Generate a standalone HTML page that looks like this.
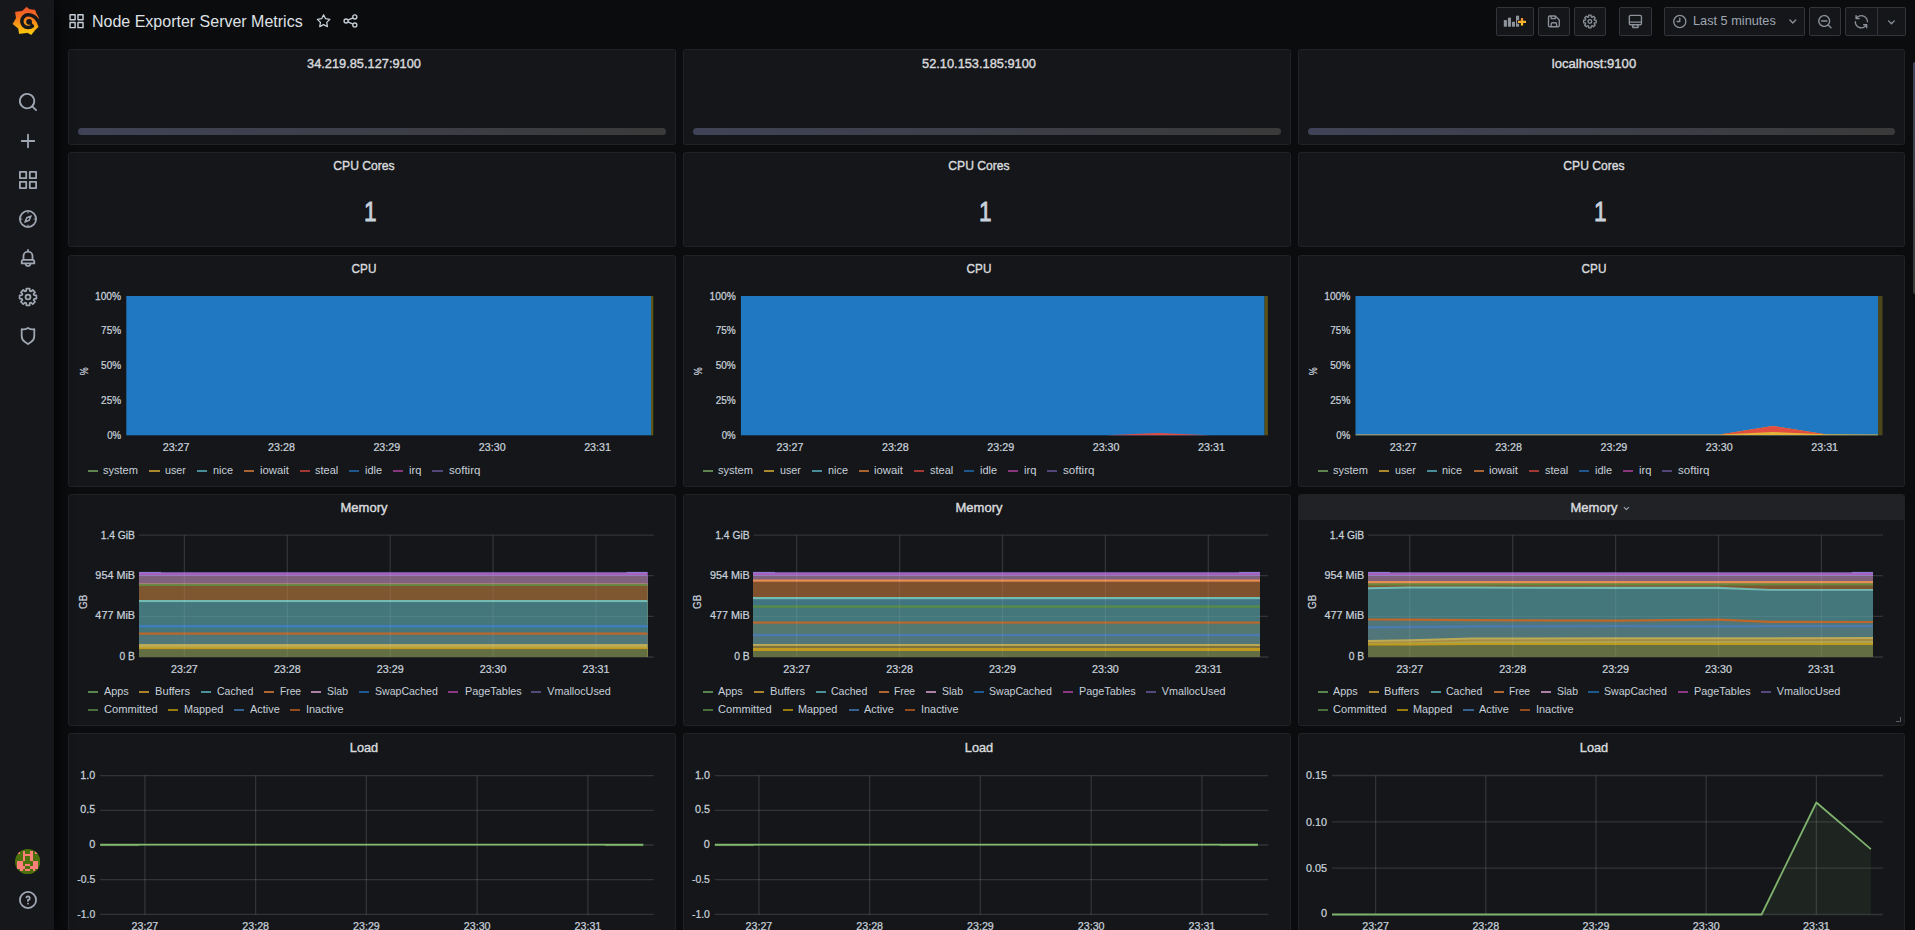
<!DOCTYPE html>
<html lang="en"><head><meta charset="utf-8">
<title>Node Exporter Server Metrics - Grafana</title>
<style>
*{box-sizing:border-box}
html,body{margin:0;padding:0}
body{width:1915px;height:930px;overflow:hidden;background:#0b0c0e;color:#c7d0d9;
 font-family:"Liberation Sans",sans-serif;font-size:12.6px;position:relative}
.abs{position:absolute}
.sidebar{position:absolute;left:0;top:0;width:54px;height:930px;background:#16171b;
 box-shadow:0 0 18px #000;z-index:5}
.sidebar svg{position:absolute}
.nav{position:absolute;left:54px;top:0;right:0;height:47px}
.title{position:absolute;top:9.9px;font-size:16.2px;line-height:22px;color:#dfe1e5;
 white-space:nowrap;transform-origin:0 50%}
.nbtn{position:absolute;top:7.2px;height:28.6px;background:#141619;border:1px solid #33353a;
 border-radius:1.8px}
.nbtn svg{position:absolute}
.tp{position:absolute;left:28.1px;top:6.1px;font-size:12.6px;line-height:15px;color:#9fa7b3;white-space:nowrap;
 transform-origin:0 50%;transform:scaleX(1.011)}
.panel{position:absolute;background:#141619;border:1px solid #202226;border-radius:2.6px;overflow:hidden}
.ptitle{position:absolute;top:6.3px;height:15px;line-height:15px;font-size:12.6px;
 color:#d8dadd;-webkit-text-stroke:0.4px #d8dadd;white-space:nowrap;text-align:center}
.thumb{position:absolute;left:8.8px;right:8.8px;bottom:8.9px;height:7.2px;border-radius:3.6px;
 background:linear-gradient(to right,#404357,#3a3a3a)}
.big{position:absolute;left:0;right:0;top:43.9px;text-align:center;font-size:27px;line-height:30px;
 color:#c9d1db;-webkit-text-stroke:0.8px #c9d1db}
.lg{position:absolute;font-size:10.8px;line-height:13px;color:#c7d0d9;white-space:nowrap;transform-origin:0 50%}
.ld{position:absolute;height:1.6px;width:10.2px}
svg text{font-family:"Liberation Sans",sans-serif}
.vthumb{position:absolute;left:1913.1px;top:61.7px;width:4px;height:232.8px;border-radius:2px;
 background:linear-gradient(to bottom,#404357,#3a3a3a);z-index:6}
</style></head><body>
<div class="sidebar">
<svg style="position:absolute;left:11px;top:5px" width="30" height="32" viewBox="0 0 872 930"><defs><linearGradient id="lgo" x1="0" y1="0" x2="0" y2="1"><stop offset="0.1" stop-color="#f05a28"/><stop offset="0.35" stop-color="#f4701f"/><stop offset="1" stop-color="#fcd10a"/></linearGradient></defs><path d="M450 55 L535 125 L700 148 L735 250 L795 350 L812 445 L760 395 L745 500 L795 640 L700 725 L590 865 L480 805 L240 835 L212 680 L52 550 L150 380 L122 200 L330 172Z" fill="url(#lgo)" stroke="url(#lgo)" stroke-width="8" stroke-linejoin="round"/><path d="M778 452 C742 388 682 328 600 300 C560 286 530 284 500 284 A186 186 0 0 0 314 470 A186 186 0 0 0 500 656 C550 656 596 640 622 612" fill="none" stroke="#16171b" stroke-width="102" stroke-linecap="round"/><path d="M628 618 L580 540" fill="none" stroke="#16171b" stroke-width="64" stroke-linecap="round"/><circle cx="526" cy="490" r="84" fill="#16171b"/></svg>
<svg style="position:absolute;left:0;top:0;transform:translate(17.20px,91.20px)" width="21.60" height="21.60" viewBox="0 0 24 24"><path fill="#9fa7b3" d="M21.71,20.29,18,16.61A9,9,0,1,0,16.61,18l3.68,3.68a1,1,0,0,0,1.42,0A1,1,0,0,0,21.71,20.29ZM11,18a7,7,0,1,1,7-7A7,7,0,0,1,11,18Z"/></svg>
<svg style="position:absolute;left:0;top:0;transform:translate(17.20px,130.20px)" width="21.60" height="21.60" viewBox="0 0 24 24"><path fill="#9fa7b3" d="M19,11H13V5a1,1,0,0,0-2,0v6H5a1,1,0,0,0,0,2h6v6a1,1,0,0,0,2,0V13h6a1,1,0,0,0,0-2Z"/></svg>
<svg style="position:absolute;left:0;top:0;transform:translate(17.20px,169.20px)" width="21.60" height="21.60" viewBox="0 0 24 24"><path fill="#9fa7b3" d="M10,13H3a1,1,0,0,0-1,1v7a1,1,0,0,0,1,1h7a1,1,0,0,0,1-1V14A1,1,0,0,0,10,13ZM9,20H4V15H9ZM21,2H14a1,1,0,0,0-1,1v7a1,1,0,0,0,1,1h7a1,1,0,0,0,1-1V3A1,1,0,0,0,21,2ZM20,9H15V4h5Zm1,4H14a1,1,0,0,0-1,1v7a1,1,0,0,0,1,1h7a1,1,0,0,0,1-1V14A1,1,0,0,0,21,13Zm-1,7H15V15h5ZM10,2H3A1,1,0,0,0,2,3v7a1,1,0,0,0,1,1h7a1,1,0,0,0,1-1V3A1,1,0,0,0,10,2ZM9,9H4V4H9Z"/></svg>
<svg style="position:absolute;left:0;top:0;transform:translate(17.20px,208.20px)" width="21.60" height="21.60" viewBox="0 0 24 24"><circle cx="12" cy="12" r="9" fill="none" stroke="#9fa7b3" stroke-width="2"/><path fill="#9fa7b3" stroke="#9fa7b3" stroke-width="1.3" stroke-linejoin="round" d="M15.6 8.4 L13.5 13.5 L8.4 15.6 L10.5 10.5Z"/><ellipse cx="12" cy="12" rx="1.7" ry="0.85" transform="rotate(-45 12 12)" fill="#16171b"/><path stroke="#9fa7b3" stroke-width="1.3" stroke-linecap="round" d="M12 4.7v.5M12 18.8v.5M4.7 12h.5M18.8 12h.5"/></svg>
<svg style="position:absolute;left:0;top:0;transform:translate(17.20px,247.20px)" width="21.60" height="21.60" viewBox="0 0 24 24"><path fill="#9fa7b3" d="M18,13.18V10a6,6,0,0,0-5-5.91V3a1,1,0,0,0-2,0V4.09A6,6,0,0,0,6,10v3.18A3,3,0,0,0,4,16v2a1,1,0,0,0,1,1H8.14a4,4,0,0,0,7.72,0H19a1,1,0,0,0,1-1V16A3,3,0,0,0,18,13.18ZM8,10a4,4,0,0,1,8,0v3H8Zm4,10a2,2,0,0,1-1.72-1h3.44A2,2,0,0,1,12,20Zm6-3H6V16a1,1,0,0,1,1-1H17a1,1,0,0,1,1,1Z"/></svg>
<svg style="position:absolute;left:0;top:0;transform:translate(17.20px,286.20px)" width="21.60" height="21.60" viewBox="0 0 24 24"><path d="M10.02 5.18 L10.15 2.68 L13.85 2.68 L13.98 5.18 L15.42 5.78 L17.28 4.10 L19.90 6.72 L18.22 8.58 L18.82 10.02 L21.32 10.15 L21.32 13.85 L18.82 13.98 L18.22 15.42 L19.90 17.28 L17.28 19.90 L15.42 18.22 L13.98 18.82 L13.85 21.32 L10.15 21.32 L10.02 18.82 L8.58 18.22 L6.72 19.90 L4.10 17.28 L5.78 15.42 L5.18 13.98 L2.68 13.85 L2.68 10.15 L5.18 10.02 L5.78 8.58 L4.10 6.72 L6.72 4.10 L8.58 5.78Z" fill="none" stroke="#9fa7b3" stroke-width="1.9" stroke-linejoin="round"/><circle cx="12" cy="12" r="2.7" fill="none" stroke="#9fa7b3" stroke-width="2"/></svg>
<svg style="position:absolute;left:0;top:0;transform:translate(17.20px,325.20px)" width="21.60" height="21.60" viewBox="0 0 24 24"><path fill="#9fa7b3" d="M19.63,3.65a1,1,0,0,0-.84-.2,8,8,0,0,1-6.22-1.27,1,1,0,0,0-1.14,0A8,8,0,0,1,5.21,3.45a1,1,0,0,0-.84.2A1,1,0,0,0,4,4.43v7.45a9,9,0,0,0,3.77,7.33l3.65,2.6a1,1,0,0,0,1.16,0l3.65-2.6A9,9,0,0,0,20,11.88V4.43A1,1,0,0,0,19.63,3.65ZM18,11.88a7,7,0,0,1-2.93,5.7L12,19.77,8.93,17.58A7,7,0,0,1,6,11.88V5.58a10,10,0,0,0,6-1.39,10,10,0,0,0,6,1.39Z"/></svg>
<svg style="position:absolute;left:14.9px;top:848.8px" width="25.3" height="25.3" viewBox="0 0 25.3 25.3"><defs><clipPath id="avc"><circle cx="12.65" cy="12.65" r="12.65"/></clipPath></defs><g clip-path="url(#avc)"><rect width="25.3" height="25.3" fill="#4c700c"/><g fill="#ff8078" shape-rendering="crispEdges"><rect x="2.47" y="2.07" width="2.77" height="2.77"/><rect x="7.51" y="2.07" width="2.77" height="2.77"/><rect x="15.07" y="2.07" width="2.77" height="2.77"/><rect x="20.11" y="2.07" width="2.77" height="2.77"/><rect x="7.51" y="4.59" width="2.77" height="2.77"/><rect x="10.03" y="4.59" width="2.77" height="2.77"/><rect x="12.55" y="4.59" width="2.77" height="2.77"/><rect x="15.07" y="4.59" width="2.77" height="2.77"/><rect x="7.51" y="7.11" width="2.77" height="2.77"/><rect x="15.07" y="7.11" width="2.77" height="2.77"/><rect x="7.51" y="9.63" width="2.77" height="2.77"/><rect x="15.07" y="9.63" width="2.77" height="2.77"/><rect x="2.47" y="12.15" width="2.77" height="2.77"/><rect x="4.99" y="12.15" width="2.77" height="2.77"/><rect x="17.59" y="12.15" width="2.77" height="2.77"/><rect x="20.11" y="12.15" width="2.77" height="2.77"/><rect x="2.47" y="14.67" width="2.77" height="2.77"/><rect x="4.99" y="14.67" width="2.77" height="2.77"/><rect x="10.03" y="14.67" width="2.77" height="2.77"/><rect x="12.55" y="14.67" width="2.77" height="2.77"/><rect x="17.59" y="14.67" width="2.77" height="2.77"/><rect x="20.11" y="14.67" width="2.77" height="2.77"/><rect x="2.47" y="17.19" width="2.77" height="2.77"/><rect x="4.99" y="17.19" width="2.77" height="2.77"/><rect x="7.51" y="17.19" width="2.77" height="2.77"/><rect x="15.07" y="17.19" width="2.77" height="2.77"/><rect x="17.59" y="17.19" width="2.77" height="2.77"/><rect x="20.11" y="17.19" width="2.77" height="2.77"/><rect x="4.99" y="19.71" width="2.77" height="2.77"/><rect x="10.03" y="19.71" width="2.77" height="2.77"/><rect x="12.55" y="19.71" width="2.77" height="2.77"/><rect x="17.59" y="19.71" width="2.77" height="2.77"/></g></g></svg>
<svg style="position:absolute;left:0;top:0;transform:translate(17.20px,889.20px)" width="21.60" height="21.60" viewBox="0 0 24 24"><path fill="#9fa7b3" d="M11.29,15.29a1.58,1.58,0,0,0-.12.15.76.76,0,0,0-.09.18.64.64,0,0,0-.06.18,1.36,1.36,0,0,0,0,.2.84.84,0,0,0,.08.38.9.9,0,0,0,.54.54.94.94,0,0,0,.76,0,.9.9,0,0,0,.54-.54A1,1,0,0,0,13,16a1,1,0,0,0-.29-.71A1,1,0,0,0,11.29,15.29ZM12,2A10,10,0,1,0,22,12,10,10,0,0,0,12,2Zm0,18a8,8,0,1,1,8-8A8,8,0,0,1,12,20ZM12,7A3,3,0,0,0,9.4,8.5a1,1,0,1,0,1.73,1A1,1,0,0,1,12,9a1,1,0,0,1,0,2,1,1,0,0,0-1,1v1a1,1,0,0,0,2,0v-.18A3,3,0,0,0,12,7Z"/></svg>
</div>
<div class="nav">
<svg style="position:absolute;left:0;top:0;transform:translate(13.90px,12.50px)" width="17.30" height="17.30" viewBox="0 0 24 24"><path fill="#c7d0d9" d="M10,13H3a1,1,0,0,0-1,1v7a1,1,0,0,0,1,1h7a1,1,0,0,0,1-1V14A1,1,0,0,0,10,13ZM9,20H4V15H9ZM21,2H14a1,1,0,0,0-1,1v7a1,1,0,0,0,1,1h7a1,1,0,0,0,1-1V3A1,1,0,0,0,21,2ZM20,9H15V4h5Zm1,4H14a1,1,0,0,0-1,1v7a1,1,0,0,0,1,1h7a1,1,0,0,0,1-1V14A1,1,0,0,0,21,13Zm-1,7H15V15h5ZM10,2H3A1,1,0,0,0,2,3v7a1,1,0,0,0,1,1h7a1,1,0,0,0,1-1V3A1,1,0,0,0,10,2ZM9,9H4V4H9Z"/></svg>
<div class="title" style="left:37.6px;transform:scaleX(0.988)">Node Exporter Server Metrics</div>
<svg style="position:absolute;left:0;top:0;transform:translate(261.30px,12.80px)" width="16.20" height="16.20" viewBox="0 0 24 24"><path d="M12.30 3.00 L15.18 8.74 L21.53 9.70 L16.96 14.21 L18.00 20.55 L12.30 17.60 L6.60 20.55 L7.64 14.21 L3.07 9.70 L9.42 8.74Z" fill="none" stroke="#c7d0d9" stroke-width="1.9" stroke-linejoin="round"/></svg>
<svg style="position:absolute;left:0;top:0;transform:translate(288.70px,12.90px)" width="16.20" height="16.20" viewBox="0 0 24 24"><g fill="none" stroke="#c7d0d9" stroke-width="2"><circle cx="18" cy="6" r="3"/><circle cx="5" cy="12" r="3"/><circle cx="18" cy="18" r="3"/><path d="M7.7 10.7L15.3 7.4M7.7 13.3L15.3 16.6"/></g></svg>
<div class="nbtn" style="left:1442.1px;width:37.7px"><svg style="position:absolute;left:-1px;top:-1px" width="38" height="29" viewBox="0 0 38 29"><defs><linearGradient id="pag" x1="0" y1="0" x2="0" y2="1"><stop offset="0" stop-color="#f08a32"/><stop offset="1" stop-color="#ffd428"/></linearGradient></defs><g fill="#8e939c"><rect x="7.8" y="13.1" width="3.1" height="6.6"/><rect x="11.9" y="10.7" width="3.1" height="9"/><rect x="15.9" y="14.8" width="3.1" height="4.9"/><rect x="20" y="8.7" width="3.1" height="11"/></g><path d="M24.9 11.1h2.2v2.6h2.9v2.2h-2.9v2.6h-2.2v-2.6h-2.9v-2.2h2.9z" fill="#141619" stroke="#141619" stroke-width="1.6"/><path d="M24.9 11.1h2.2v2.6h2.9v2.2h-2.9v2.6h-2.2v-2.6h-2.9v-2.2h2.9z" fill="url(#pag)"/></svg></div>
<div class="nbtn" style="left:1484.1px;width:31.7px"><svg style="position:absolute;left:0;top:0;transform:translate(6.80px,5.30px)" width="16.20" height="16.20" viewBox="0 0 24 24"><path fill="#8b9099" d="M20.71,9.29l-6-6a1,1,0,0,0-.32-.21A1.09,1.09,0,0,0,14,3H6A3,3,0,0,0,3,6V18a3,3,0,0,0,3,3H18a3,3,0,0,0,3-3V10A1,1,0,0,0,20.71,9.29ZM9,5h4V7H9Zm6,14H9V16a1,1,0,0,1,1-1h4a1,1,0,0,1,1,1Zm4-1a1,1,0,0,1-1,1H17V16a3,3,0,0,0-3-3H10a3,3,0,0,0-3,3v3H6a1,1,0,0,1-1-1V6A1,1,0,0,1,6,5H7V8A1,1,0,0,0,8,9h6a1,1,0,0,0,1-1V6.41l4,4Z"/></svg></div>
<div class="nbtn" style="left:1520.1px;width:31.7px"><svg style="position:absolute;left:0;top:0;transform:translate(6.80px,5.40px)" width="16.20" height="16.20" viewBox="0 0 24 24"><path d="M10.02 5.18 L10.15 2.68 L13.85 2.68 L13.98 5.18 L15.42 5.78 L17.28 4.10 L19.90 6.72 L18.22 8.58 L18.82 10.02 L21.32 10.15 L21.32 13.85 L18.82 13.98 L18.22 15.42 L19.90 17.28 L17.28 19.90 L15.42 18.22 L13.98 18.82 L13.85 21.32 L10.15 21.32 L10.02 18.82 L8.58 18.22 L6.72 19.90 L4.10 17.28 L5.78 15.42 L5.18 13.98 L2.68 13.85 L2.68 10.15 L5.18 10.02 L5.78 8.58 L4.10 6.72 L6.72 4.10 L8.58 5.78Z" fill="none" stroke="#8b9099" stroke-width="1.9" stroke-linejoin="round"/><circle cx="12" cy="12" r="2.7" fill="none" stroke="#8b9099" stroke-width="2"/></svg></div>
<div class="nbtn" style="left:1565.1px;width:32.8px"><svg style="position:absolute;left:0;top:0;transform:translate(7.30px,5.30px)" width="16.20" height="16.20" viewBox="0 0 24 24"><path fill="#8b9099" d="M19,2H5A3,3,0,0,0,2,5V15a3,3,0,0,0,3,3H7.64l-.58,1a2,2,0,0,0,0,2,2,2,0,0,0,1.75,1h6.46A2,2,0,0,0,17,21a2,2,0,0,0,0-2l-.59-1H19a3,3,0,0,0,3-3V5A3,3,0,0,0,19,2ZM8.77,20,10,18H14l1.2,2ZM20,15a1,1,0,0,1-1,1H5a1,1,0,0,1-1-1V14H20Zm0-3H4V5A1,1,0,0,1,5,4H19a1,1,0,0,1,1,1Z"/></svg></div>
<div class="nbtn" style="left:1610.2px;width:140.8px"><svg style="position:absolute;left:0;top:0;transform:translate(6.70px,5.40px)" width="16.20" height="16.20" viewBox="0 0 24 24"><path fill="#8b9099" d="M12,2A10,10,0,1,0,22,12,10,10,0,0,0,12,2Zm0,18a8,8,0,1,1,8-8A8,8,0,0,1,12,20ZM12,6a1,1,0,0,0-1,1v4H8a1,1,0,0,0,0,2h4a1,1,0,0,0,1-1V7A1,1,0,0,0,12,6Z"/></svg><div class="tp">Last 5 minutes</div><svg style="position:absolute;left:0;top:0;transform:translate(119.70px,5.40px)" width="16.20" height="16.20" viewBox="0 0 24 24"><path fill="#8b9099" d="M17,9.17a1,1,0,0,0-1.41,0L12,12.71,8.46,9.17a1,1,0,0,0-1.41,0,1,1,0,0,0,0,1.42l4.24,4.24a1,1,0,0,0,1.42,0L17,10.59A1,1,0,0,0,17,9.17Z"/></svg></div>
<div class="nbtn" style="left:1755.1px;width:31.9px"><svg style="position:absolute;left:0;top:0;transform:translate(6.80px,5.60px)" width="16.20" height="16.20" viewBox="0 0 24 24"><path fill="#8b9099" d="M21.71,20.29,18,16.61A9,9,0,1,0,16.61,18l3.68,3.68a1,1,0,0,0,1.42,0A1,1,0,0,0,21.71,20.29ZM11,18a7,7,0,1,1,7-7A7,7,0,0,1,11,18Zm4-8H7a1,1,0,0,0,0,2h8a1,1,0,0,0,0-2Z"/></svg></div>
<div class="nbtn" style="left:1791.1px;width:32.8px;border-radius:2px 0 0 2px"><svg style="position:absolute;left:0;top:0;transform:translate(7.30px,5.60px)" width="16.20" height="16.20" viewBox="0 0 24 24"><path fill="#8b9099" d="M19.91,15.51H15.38a1,1,0,0,0,0,2h2.4A8,8,0,0,1,4,12a1,1,0,0,0-2,0,10,10,0,0,0,16.88,7.23V21a1,1,0,0,0,2,0V16.5A1,1,0,0,0,19.91,15.51ZM12,2A10,10,0,0,0,5.12,4.77V3a1,1,0,0,0-2,0V7.5a1,1,0,0,0,1,1h4.5a1,1,0,0,0,0-2H6.22A8,8,0,0,1,20,12a1,1,0,0,0,2,0A10,10,0,0,0,12,2Z"/></svg></div>
<div class="nbtn" style="left:1823.9px;width:27.8px;border-left:0;border-radius:0 2px 2px 0"><svg style="position:absolute;left:0;top:0;transform:translate(5.30px,6.20px)" width="16.20" height="16.20" viewBox="0 0 24 24"><path fill="#8b9099" d="M17,9.17a1,1,0,0,0-1.41,0L12,12.71,8.46,9.17a1,1,0,0,0-1.41,0,1,1,0,0,0,0,1.42l4.24,4.24a1,1,0,0,0,1.42,0L17,10.59A1,1,0,0,0,17,9.17Z"/></svg></div>
</div>
<div class="panel" style="left:68.0px;top:49.0px;width:608.0px;height:96.0px"><div class="ptitle" style="left:295.1px;top:7.0px;transform:translateX(-50%) scaleX(1.017)">34.219.85.127:9100</div><div class="thumb"></div></div>
<div class="panel" style="left:68.0px;top:152.0px;width:608.0px;height:95.0px"><div class="ptitle" style="left:295.1px;top:6.3px;transform:translateX(-50%) scaleX(0.963)">CPU Cores</div><div class="big"><span style="display:inline-block;transform:translateX(-1.2px) scaleX(0.84)">1</span></div></div>
<div class="panel" style="left:68.0px;top:255.0px;width:608.0px;height:232.0px"><div class="ptitle" style="left:295.1px;top:6.3px;transform:translateX(-50%) scaleX(0.931)">CPU</div><svg style="position:absolute;left:-1px;top:-1px" width="608.0" height="232.0" viewBox="68.0 255.0 608.0 232.0"><text transform="translate(121.10 300.00) scale(0.945 1)" font-size="10.8" fill="#c7d0d9" stroke="#c7d0d9" stroke-width="0.25" text-anchor="end">100%</text><text transform="translate(121.10 334.22) scale(0.927 1)" font-size="10.8" fill="#c7d0d9" stroke="#c7d0d9" stroke-width="0.25" text-anchor="end">75%</text><text transform="translate(121.10 369.05) scale(0.927 1)" font-size="10.8" fill="#c7d0d9" stroke="#c7d0d9" stroke-width="0.25" text-anchor="end">50%</text><text transform="translate(121.10 403.88) scale(0.927 1)" font-size="10.8" fill="#c7d0d9" stroke="#c7d0d9" stroke-width="0.25" text-anchor="end">25%</text><text transform="translate(121.10 438.70) scale(0.895 1)" font-size="10.8" fill="#c7d0d9" stroke="#c7d0d9" stroke-width="0.25" text-anchor="end">0%</text><text transform="translate(176.10 450.70) scale(0.994 1)" font-size="10.8" fill="#c7d0d9" stroke="#c7d0d9" stroke-width="0.25" text-anchor="middle">23:27</text><text transform="translate(281.46 450.70) scale(0.994 1)" font-size="10.8" fill="#c7d0d9" stroke="#c7d0d9" stroke-width="0.25" text-anchor="middle">23:28</text><text transform="translate(386.82 450.70) scale(0.994 1)" font-size="10.8" fill="#c7d0d9" stroke="#c7d0d9" stroke-width="0.25" text-anchor="middle">23:29</text><text transform="translate(492.18 450.70) scale(0.994 1)" font-size="10.8" fill="#c7d0d9" stroke="#c7d0d9" stroke-width="0.25" text-anchor="middle">23:30</text><text transform="translate(597.54 450.70) scale(0.994 1)" font-size="10.8" fill="#c7d0d9" stroke="#c7d0d9" stroke-width="0.25" text-anchor="middle">23:31</text><text transform="translate(87.50 371.30) rotate(-90) scale(0.824 1)" font-size="10.8" fill="#c7d0d9" stroke="#c7d0d9" stroke-width="0.25" text-anchor="middle">%</text><rect x="126.3" y="296.0" width="524.7" height="139.3" fill="#2078c3"/><rect x="651.0" y="296.0" width="2.3" height="139.3" fill="#5f561a"/></svg><div class="ld" style="left:19.0px;top:214.2px;background:#5e8452"></div><div class="lg" style="left:34.4px;top:208.4px;transform:scaleX(1.022)">system</div><div class="ld" style="left:80.4px;top:214.2px;background:#ab882d"></div><div class="lg" style="left:96.4px;top:208.4px;transform:scaleX(0.995)">user</div><div class="ld" style="left:128.2px;top:214.2px;background:#488d9a"></div><div class="lg" style="left:143.9px;top:208.4px;transform:scaleX(1.007)">nice</div><div class="ld" style="left:175.0px;top:214.2px;background:#a86330"></div><div class="lg" style="left:190.8px;top:208.4px;transform:scaleX(1.047)">iowait</div><div class="ld" style="left:230.5px;top:214.2px;background:#a13834"></div><div class="lg" style="left:246.3px;top:208.4px;transform:scaleX(1.022)">steal</div><div class="ld" style="left:280.2px;top:214.2px;background:#1e578d"></div><div class="lg" style="left:296.4px;top:208.4px;transform:scaleX(1.014)">idle</div><div class="ld" style="left:324.1px;top:214.2px;background:#87357c"></div><div class="lg" style="left:340.4px;top:208.4px;transform:scaleX(1.034)">irq</div><div class="ld" style="left:363.4px;top:214.2px;background:#524678"></div><div class="lg" style="left:379.6px;top:208.4px;transform:scaleX(1.068)">softirq</div></div>
<div class="panel" style="left:68.0px;top:494.0px;width:608.0px;height:232.0px"><div class="ptitle" style="left:295.1px;top:6.3px;transform:translateX(-50%) scaleX(1.032)">Memory</div><svg style="position:absolute;left:-1px;top:-1px" width="608.0" height="232.0" viewBox="68.0 494.0 608.0 232.0"><text transform="translate(135.00 539.30) scale(0.954 1)" font-size="10.8" fill="#c7d0d9" stroke="#c7d0d9" stroke-width="0.25" text-anchor="end">1.4 GiB</text><path d="M139.0 535.20H653.8" stroke="rgba(200,200,200,0.165)" stroke-width="1.30"/><text transform="translate(135.00 578.80) scale(1.001 1)" font-size="10.8" fill="#c7d0d9" stroke="#c7d0d9" stroke-width="0.25" text-anchor="end">954 MiB</text><path d="M139.0 575.70H653.8" stroke="rgba(200,200,200,0.165)" stroke-width="1.30"/><text transform="translate(135.00 619.40) scale(1.001 1)" font-size="10.8" fill="#c7d0d9" stroke="#c7d0d9" stroke-width="0.25" text-anchor="end">477 MiB</text><path d="M139.0 616.30H653.8" stroke="rgba(200,200,200,0.165)" stroke-width="1.30"/><text transform="translate(135.00 660.10) scale(0.954 1)" font-size="10.8" fill="#c7d0d9" stroke="#c7d0d9" stroke-width="0.25" text-anchor="end">0 B</text><path d="M139.0 657.00H653.8" stroke="rgba(200,200,200,0.165)" stroke-width="1.30"/><path d="M184.40 535.2V657.0" stroke="rgba(200,200,200,0.165)" stroke-width="1.30"/><text transform="translate(184.40 672.50) scale(0.994 1)" font-size="10.8" fill="#c7d0d9" stroke="#c7d0d9" stroke-width="0.25" text-anchor="middle">23:27</text><path d="M287.30 535.2V657.0" stroke="rgba(200,200,200,0.165)" stroke-width="1.30"/><text transform="translate(287.30 672.50) scale(0.994 1)" font-size="10.8" fill="#c7d0d9" stroke="#c7d0d9" stroke-width="0.25" text-anchor="middle">23:28</text><path d="M390.20 535.2V657.0" stroke="rgba(200,200,200,0.165)" stroke-width="1.30"/><text transform="translate(390.20 672.50) scale(0.994 1)" font-size="10.8" fill="#c7d0d9" stroke="#c7d0d9" stroke-width="0.25" text-anchor="middle">23:29</text><path d="M493.10 535.2V657.0" stroke="rgba(200,200,200,0.165)" stroke-width="1.30"/><text transform="translate(493.10 672.50) scale(0.994 1)" font-size="10.8" fill="#c7d0d9" stroke="#c7d0d9" stroke-width="0.25" text-anchor="middle">23:30</text><path d="M596.00 535.2V657.0" stroke="rgba(200,200,200,0.165)" stroke-width="1.30"/><text transform="translate(596.00 672.50) scale(0.994 1)" font-size="10.8" fill="#c7d0d9" stroke="#c7d0d9" stroke-width="0.25" text-anchor="middle">23:31</text><text transform="translate(86.80 601.90) rotate(-90) scale(0.902 1)" font-size="10.8" fill="#c7d0d9" stroke="#c7d0d9" stroke-width="0.25" text-anchor="middle">GB</text><rect x="139.0" y="572.20" width="508.5" height="84.80" fill="#8c69c0"/><rect x="139.0" y="573.30" width="508.5" height="83.70" fill="#ab5dbb"/><rect x="139.0" y="575.00" width="508.5" height="82.00" fill="#9382c0"/><rect x="139.0" y="575.90" width="508.5" height="81.10" fill="#80627e"/><rect x="139.0" y="583.40" width="508.5" height="73.60" fill="#c0907c"/><rect x="139.0" y="584.10" width="508.5" height="72.90" fill="#668640"/><rect x="139.0" y="586.00" width="508.5" height="71.00" fill="#7e562f"/><rect x="139.0" y="600.00" width="508.5" height="57.00" fill="#72bab2"/><rect x="139.0" y="602.10" width="508.5" height="54.90" fill="#43777b"/><rect x="139.0" y="625.00" width="508.5" height="32.00" fill="#3e7cbc"/><rect x="139.0" y="627.40" width="508.5" height="29.60" fill="#43777b"/><rect x="139.0" y="632.50" width="508.5" height="24.50" fill="#bf6629"/><rect x="139.0" y="634.70" width="508.5" height="22.30" fill="#50767a"/><rect x="139.0" y="644.00" width="508.5" height="13.00" fill="#bbab56"/><rect x="139.0" y="647.30" width="508.5" height="9.70" fill="#c09a1e"/><rect x="139.0" y="649.10" width="508.5" height="7.90" fill="#636f43"/><rect x="139.0" y="571.9" width="22" height="1.3" fill="#9478cf"/><rect x="626.5" y="571.9" width="21" height="1.4" fill="#9478cf"/><path d="M184.40 572.2V657.0" stroke="rgba(255,255,255,0.07)" stroke-width="1.30"/><path d="M287.30 572.2V657.0" stroke="rgba(255,255,255,0.07)" stroke-width="1.30"/><path d="M390.20 572.2V657.0" stroke="rgba(255,255,255,0.07)" stroke-width="1.30"/><path d="M493.10 572.2V657.0" stroke="rgba(255,255,255,0.07)" stroke-width="1.30"/><path d="M596.00 572.2V657.0" stroke="rgba(255,255,255,0.07)" stroke-width="1.30"/><path d="M139.0 616.30H647.5" stroke="rgba(255,255,255,0.06)" stroke-width="1.30"/></svg><div class="ld" style="left:19.0px;top:196.1px;background:#59844d"></div><div class="lg" style="left:34.6px;top:190.3px;transform:scaleX(1.005)">Apps</div><div class="ld" style="left:70.0px;top:196.1px;background:#aa842a"></div><div class="lg" style="left:85.9px;top:190.3px;transform:scaleX(1.032)">Buffers</div><div class="ld" style="left:132.2px;top:196.1px;background:#4c919a"></div><div class="lg" style="left:147.7px;top:190.3px;transform:scaleX(0.976)">Cached</div><div class="ld" style="left:195.0px;top:196.1px;background:#af6633"></div><div class="lg" style="left:210.7px;top:190.3px;transform:scaleX(0.949)">Free</div><div class="ld" style="left:242.1px;top:196.1px;background:#aa80a7"></div><div class="lg" style="left:258.0px;top:190.3px;transform:scaleX(0.970)">Slab</div><div class="ld" style="left:289.9px;top:196.1px;background:#1d5991"></div><div class="lg" style="left:305.8px;top:190.3px;transform:scaleX(0.977)">SwapCached</div><div class="ld" style="left:379.3px;top:196.1px;background:#8c3784"></div><div class="lg" style="left:395.5px;top:190.3px;transform:scaleX(1.006)">PageTables</div><div class="ld" style="left:462.0px;top:196.1px;background:#54487c"></div><div class="lg" style="left:478.2px;top:190.3px;transform:scaleX(1.000)">VmallocUsed</div><div class="ld" style="left:19.0px;top:214.1px;background:#486f3b"></div><div class="lg" style="left:34.6px;top:208.3px;transform:scaleX(1.027)">Committed</div><div class="ld" style="left:98.9px;top:214.1px;background:#997b0c"></div><div class="lg" style="left:114.8px;top:208.3px;transform:scaleX(1.005)">Mapped</div><div class="ld" style="left:164.9px;top:214.1px;background:#366291"></div><div class="lg" style="left:180.6px;top:208.3px;transform:scaleX(1.013)">Active</div><div class="ld" style="left:221.3px;top:214.1px;background:#954c1d"></div><div class="lg" style="left:237.1px;top:208.3px;transform:scaleX(1.008)">Inactive</div></div>
<div class="panel" style="left:68.0px;top:733.0px;width:608.0px;height:232.0px"><div class="ptitle" style="left:295.1px;top:7.0px;transform:translateX(-50%) scaleX(1.014)">Load</div><svg style="position:absolute;left:-1px;top:-1px" width="608.0" height="232.0" viewBox="68.0 733.0 608.0 232.0"><text transform="translate(95.30 779.00) scale(0.997 1)" font-size="10.8" fill="#c7d0d9" stroke="#c7d0d9" stroke-width="0.25" text-anchor="end">1.0</text><path d="M100.2 775.60H653.8" stroke="rgba(200,200,200,0.165)" stroke-width="1.30"/><text transform="translate(95.30 813.00) scale(0.997 1)" font-size="10.8" fill="#c7d0d9" stroke="#c7d0d9" stroke-width="0.25" text-anchor="end">0.5</text><path d="M100.2 810.30H653.8" stroke="rgba(200,200,200,0.165)" stroke-width="1.30"/><text transform="translate(95.30 848.40) scale(1.010 1)" font-size="10.8" fill="#c7d0d9" stroke="#c7d0d9" stroke-width="0.25" text-anchor="end">0</text><path d="M100.2 845.00H653.8" stroke="rgba(200,200,200,0.165)" stroke-width="1.30"/><text transform="translate(95.30 883.10) scale(0.965 1)" font-size="10.8" fill="#c7d0d9" stroke="#c7d0d9" stroke-width="0.25" text-anchor="end">-0.5</text><path d="M100.2 879.70H653.8" stroke="rgba(200,200,200,0.165)" stroke-width="1.30"/><text transform="translate(95.30 917.80) scale(0.965 1)" font-size="10.8" fill="#c7d0d9" stroke="#c7d0d9" stroke-width="0.25" text-anchor="end">-1.0</text><path d="M100.2 914.40H653.8" stroke="rgba(200,200,200,0.165)" stroke-width="1.30"/><path d="M144.90 775.6V914.4" stroke="rgba(200,200,200,0.165)" stroke-width="1.30"/><text transform="translate(144.90 930.10) scale(0.994 1)" font-size="10.8" fill="#c7d0d9" stroke="#c7d0d9" stroke-width="0.25" text-anchor="middle">23:27</text><path d="M255.65 775.6V914.4" stroke="rgba(200,200,200,0.165)" stroke-width="1.30"/><text transform="translate(255.65 930.10) scale(0.994 1)" font-size="10.8" fill="#c7d0d9" stroke="#c7d0d9" stroke-width="0.25" text-anchor="middle">23:28</text><path d="M366.40 775.6V914.4" stroke="rgba(200,200,200,0.165)" stroke-width="1.30"/><text transform="translate(366.40 930.10) scale(0.994 1)" font-size="10.8" fill="#c7d0d9" stroke="#c7d0d9" stroke-width="0.25" text-anchor="middle">23:29</text><path d="M477.15 775.6V914.4" stroke="rgba(200,200,200,0.165)" stroke-width="1.30"/><text transform="translate(477.15 930.10) scale(0.994 1)" font-size="10.8" fill="#c7d0d9" stroke="#c7d0d9" stroke-width="0.25" text-anchor="middle">23:30</text><path d="M587.90 775.6V914.4" stroke="rgba(200,200,200,0.165)" stroke-width="1.30"/><text transform="translate(587.90 930.10) scale(0.994 1)" font-size="10.8" fill="#c7d0d9" stroke="#c7d0d9" stroke-width="0.25" text-anchor="middle">23:31</text><path d="M100.2 844.65H643.3" stroke="#82bb6e" stroke-width="1.7"/><path d="M100.2 845.6H139.1M605.0 845.6H643.3" stroke="#82bb6e" stroke-width="0.6"/></svg></div>
<div class="panel" style="left:683.0px;top:49.0px;width:608.0px;height:96.0px"><div class="ptitle" style="left:295.0px;top:7.0px;transform:translateX(-50%) scaleX(1.017)">52.10.153.185:9100</div><div class="thumb"></div></div>
<div class="panel" style="left:683.0px;top:152.0px;width:608.0px;height:95.0px"><div class="ptitle" style="left:295.0px;top:6.3px;transform:translateX(-50%) scaleX(0.963)">CPU Cores</div><div class="big"><span style="display:inline-block;transform:translateX(-1.2px) scaleX(0.84)">1</span></div></div>
<div class="panel" style="left:683.0px;top:255.0px;width:608.0px;height:232.0px"><div class="ptitle" style="left:295.0px;top:6.3px;transform:translateX(-50%) scaleX(0.931)">CPU</div><svg style="position:absolute;left:-1px;top:-1px" width="608.0" height="232.0" viewBox="683.0 255.0 608.0 232.0"><text transform="translate(735.70 300.00) scale(0.945 1)" font-size="10.8" fill="#c7d0d9" stroke="#c7d0d9" stroke-width="0.25" text-anchor="end">100%</text><text transform="translate(735.70 334.22) scale(0.927 1)" font-size="10.8" fill="#c7d0d9" stroke="#c7d0d9" stroke-width="0.25" text-anchor="end">75%</text><text transform="translate(735.70 369.05) scale(0.927 1)" font-size="10.8" fill="#c7d0d9" stroke="#c7d0d9" stroke-width="0.25" text-anchor="end">50%</text><text transform="translate(735.70 403.88) scale(0.927 1)" font-size="10.8" fill="#c7d0d9" stroke="#c7d0d9" stroke-width="0.25" text-anchor="end">25%</text><text transform="translate(735.70 438.70) scale(0.895 1)" font-size="10.8" fill="#c7d0d9" stroke="#c7d0d9" stroke-width="0.25" text-anchor="end">0%</text><text transform="translate(790.00 450.70) scale(0.994 1)" font-size="10.8" fill="#c7d0d9" stroke="#c7d0d9" stroke-width="0.25" text-anchor="middle">23:27</text><text transform="translate(895.36 450.70) scale(0.994 1)" font-size="10.8" fill="#c7d0d9" stroke="#c7d0d9" stroke-width="0.25" text-anchor="middle">23:28</text><text transform="translate(1000.72 450.70) scale(0.994 1)" font-size="10.8" fill="#c7d0d9" stroke="#c7d0d9" stroke-width="0.25" text-anchor="middle">23:29</text><text transform="translate(1106.08 450.70) scale(0.994 1)" font-size="10.8" fill="#c7d0d9" stroke="#c7d0d9" stroke-width="0.25" text-anchor="middle">23:30</text><text transform="translate(1211.44 450.70) scale(0.994 1)" font-size="10.8" fill="#c7d0d9" stroke="#c7d0d9" stroke-width="0.25" text-anchor="middle">23:31</text><text transform="translate(702.10 371.30) rotate(-90) scale(0.824 1)" font-size="10.8" fill="#c7d0d9" stroke="#c7d0d9" stroke-width="0.25" text-anchor="middle">%</text><rect x="740.9" y="296.0" width="523.7" height="139.3" fill="#2078c3"/><rect x="1264.6" y="296.0" width="3.3" height="139.3" fill="#585019"/><path d="M1106 435.3L1158 432.9L1210 435.3Z" fill="#e24d42"/></svg><div class="ld" style="left:18.6px;top:214.2px;background:#5e8452"></div><div class="lg" style="left:34.0px;top:208.4px;transform:scaleX(1.022)">system</div><div class="ld" style="left:80.0px;top:214.2px;background:#ab882d"></div><div class="lg" style="left:96.0px;top:208.4px;transform:scaleX(0.995)">user</div><div class="ld" style="left:127.8px;top:214.2px;background:#488d9a"></div><div class="lg" style="left:143.5px;top:208.4px;transform:scaleX(1.007)">nice</div><div class="ld" style="left:174.6px;top:214.2px;background:#a86330"></div><div class="lg" style="left:190.4px;top:208.4px;transform:scaleX(1.047)">iowait</div><div class="ld" style="left:230.1px;top:214.2px;background:#a13834"></div><div class="lg" style="left:245.9px;top:208.4px;transform:scaleX(1.022)">steal</div><div class="ld" style="left:279.8px;top:214.2px;background:#1e578d"></div><div class="lg" style="left:296.0px;top:208.4px;transform:scaleX(1.014)">idle</div><div class="ld" style="left:323.7px;top:214.2px;background:#87357c"></div><div class="lg" style="left:340.0px;top:208.4px;transform:scaleX(1.034)">irq</div><div class="ld" style="left:363.0px;top:214.2px;background:#524678"></div><div class="lg" style="left:379.2px;top:208.4px;transform:scaleX(1.068)">softirq</div></div>
<div class="panel" style="left:683.0px;top:494.0px;width:608.0px;height:232.0px"><div class="ptitle" style="left:295.0px;top:6.3px;transform:translateX(-50%) scaleX(1.032)">Memory</div><svg style="position:absolute;left:-1px;top:-1px" width="608.0" height="232.0" viewBox="683.0 494.0 608.0 232.0"><text transform="translate(749.60 539.30) scale(0.954 1)" font-size="10.8" fill="#c7d0d9" stroke="#c7d0d9" stroke-width="0.25" text-anchor="end">1.4 GiB</text><path d="M753.6 535.20H1268.4" stroke="rgba(200,200,200,0.165)" stroke-width="1.30"/><text transform="translate(749.60 578.80) scale(1.001 1)" font-size="10.8" fill="#c7d0d9" stroke="#c7d0d9" stroke-width="0.25" text-anchor="end">954 MiB</text><path d="M753.6 575.70H1268.4" stroke="rgba(200,200,200,0.165)" stroke-width="1.30"/><text transform="translate(749.60 619.40) scale(1.001 1)" font-size="10.8" fill="#c7d0d9" stroke="#c7d0d9" stroke-width="0.25" text-anchor="end">477 MiB</text><path d="M753.6 616.30H1268.4" stroke="rgba(200,200,200,0.165)" stroke-width="1.30"/><text transform="translate(749.60 660.10) scale(0.954 1)" font-size="10.8" fill="#c7d0d9" stroke="#c7d0d9" stroke-width="0.25" text-anchor="end">0 B</text><path d="M753.6 657.00H1268.4" stroke="rgba(200,200,200,0.165)" stroke-width="1.30"/><path d="M796.70 535.2V657.0" stroke="rgba(200,200,200,0.165)" stroke-width="1.30"/><text transform="translate(796.70 672.50) scale(0.994 1)" font-size="10.8" fill="#c7d0d9" stroke="#c7d0d9" stroke-width="0.25" text-anchor="middle">23:27</text><path d="M899.60 535.2V657.0" stroke="rgba(200,200,200,0.165)" stroke-width="1.30"/><text transform="translate(899.60 672.50) scale(0.994 1)" font-size="10.8" fill="#c7d0d9" stroke="#c7d0d9" stroke-width="0.25" text-anchor="middle">23:28</text><path d="M1002.50 535.2V657.0" stroke="rgba(200,200,200,0.165)" stroke-width="1.30"/><text transform="translate(1002.50 672.50) scale(0.994 1)" font-size="10.8" fill="#c7d0d9" stroke="#c7d0d9" stroke-width="0.25" text-anchor="middle">23:29</text><path d="M1105.40 535.2V657.0" stroke="rgba(200,200,200,0.165)" stroke-width="1.30"/><text transform="translate(1105.40 672.50) scale(0.994 1)" font-size="10.8" fill="#c7d0d9" stroke="#c7d0d9" stroke-width="0.25" text-anchor="middle">23:30</text><path d="M1208.30 535.2V657.0" stroke="rgba(200,200,200,0.165)" stroke-width="1.30"/><text transform="translate(1208.30 672.50) scale(0.994 1)" font-size="10.8" fill="#c7d0d9" stroke="#c7d0d9" stroke-width="0.25" text-anchor="middle">23:31</text><text transform="translate(701.40 601.90) rotate(-90) scale(0.902 1)" font-size="10.8" fill="#c7d0d9" stroke="#c7d0d9" stroke-width="0.25" text-anchor="middle">GB</text><rect x="753.0" y="572.20" width="507.0" height="84.80" fill="#8c69c0"/><rect x="753.0" y="573.30" width="507.0" height="83.70" fill="#ab5dbb"/><rect x="753.0" y="575.00" width="507.0" height="82.00" fill="#9382c0"/><rect x="753.0" y="575.90" width="507.0" height="81.10" fill="#80627e"/><rect x="753.0" y="579.50" width="507.0" height="77.50" fill="#e88c55"/><rect x="753.0" y="581.70" width="507.0" height="75.30" fill="#80512d"/><rect x="753.0" y="597.00" width="507.0" height="60.00" fill="#72bab2"/><rect x="753.0" y="599.20" width="507.0" height="57.80" fill="#417483"/><rect x="753.0" y="605.30" width="507.0" height="51.70" fill="#558a4a"/><rect x="753.0" y="607.80" width="507.0" height="49.20" fill="#43777b"/><rect x="753.0" y="621.50" width="507.0" height="35.50" fill="#bf6629"/><rect x="753.0" y="623.60" width="507.0" height="33.40" fill="#527870"/><rect x="753.0" y="633.80" width="507.0" height="23.20" fill="#4c7aae"/><rect x="753.0" y="636.20" width="507.0" height="20.80" fill="#50767a"/><rect x="753.0" y="644.00" width="507.0" height="13.00" fill="#bbab56"/><rect x="753.0" y="645.90" width="507.0" height="11.10" fill="#80703c"/><rect x="753.0" y="648.00" width="507.0" height="9.00" fill="#c09a1e"/><rect x="753.0" y="651.00" width="507.0" height="6.00" fill="#636f43"/><rect x="753.0" y="571.9" width="22" height="1.3" fill="#9478cf"/><rect x="1239.0" y="571.9" width="21" height="1.4" fill="#9478cf"/><path d="M796.70 572.2V657.0" stroke="rgba(255,255,255,0.07)" stroke-width="1.30"/><path d="M899.60 572.2V657.0" stroke="rgba(255,255,255,0.07)" stroke-width="1.30"/><path d="M1002.50 572.2V657.0" stroke="rgba(255,255,255,0.07)" stroke-width="1.30"/><path d="M1105.40 572.2V657.0" stroke="rgba(255,255,255,0.07)" stroke-width="1.30"/><path d="M1208.30 572.2V657.0" stroke="rgba(255,255,255,0.07)" stroke-width="1.30"/><path d="M753.0 616.30H1260.0" stroke="rgba(255,255,255,0.06)" stroke-width="1.30"/></svg><div class="ld" style="left:18.6px;top:196.1px;background:#59844d"></div><div class="lg" style="left:34.2px;top:190.3px;transform:scaleX(1.005)">Apps</div><div class="ld" style="left:69.6px;top:196.1px;background:#aa842a"></div><div class="lg" style="left:85.5px;top:190.3px;transform:scaleX(1.032)">Buffers</div><div class="ld" style="left:131.8px;top:196.1px;background:#4c919a"></div><div class="lg" style="left:147.3px;top:190.3px;transform:scaleX(0.976)">Cached</div><div class="ld" style="left:194.6px;top:196.1px;background:#af6633"></div><div class="lg" style="left:210.3px;top:190.3px;transform:scaleX(0.949)">Free</div><div class="ld" style="left:241.7px;top:196.1px;background:#aa80a7"></div><div class="lg" style="left:257.6px;top:190.3px;transform:scaleX(0.970)">Slab</div><div class="ld" style="left:289.5px;top:196.1px;background:#1d5991"></div><div class="lg" style="left:305.4px;top:190.3px;transform:scaleX(0.977)">SwapCached</div><div class="ld" style="left:378.9px;top:196.1px;background:#8c3784"></div><div class="lg" style="left:395.1px;top:190.3px;transform:scaleX(1.006)">PageTables</div><div class="ld" style="left:461.6px;top:196.1px;background:#54487c"></div><div class="lg" style="left:477.8px;top:190.3px;transform:scaleX(1.000)">VmallocUsed</div><div class="ld" style="left:18.6px;top:214.1px;background:#486f3b"></div><div class="lg" style="left:34.2px;top:208.3px;transform:scaleX(1.027)">Committed</div><div class="ld" style="left:98.5px;top:214.1px;background:#997b0c"></div><div class="lg" style="left:114.4px;top:208.3px;transform:scaleX(1.005)">Mapped</div><div class="ld" style="left:164.5px;top:214.1px;background:#366291"></div><div class="lg" style="left:180.2px;top:208.3px;transform:scaleX(1.013)">Active</div><div class="ld" style="left:220.9px;top:214.1px;background:#954c1d"></div><div class="lg" style="left:236.7px;top:208.3px;transform:scaleX(1.008)">Inactive</div></div>
<div class="panel" style="left:683.0px;top:733.0px;width:608.0px;height:232.0px"><div class="ptitle" style="left:295.0px;top:7.0px;transform:translateX(-50%) scaleX(1.014)">Load</div><svg style="position:absolute;left:-1px;top:-1px" width="608.0" height="232.0" viewBox="683.0 733.0 608.0 232.0"><text transform="translate(709.90 779.00) scale(0.997 1)" font-size="10.8" fill="#c7d0d9" stroke="#c7d0d9" stroke-width="0.25" text-anchor="end">1.0</text><path d="M714.8 775.60H1268.4" stroke="rgba(200,200,200,0.165)" stroke-width="1.30"/><text transform="translate(709.90 813.00) scale(0.997 1)" font-size="10.8" fill="#c7d0d9" stroke="#c7d0d9" stroke-width="0.25" text-anchor="end">0.5</text><path d="M714.8 810.30H1268.4" stroke="rgba(200,200,200,0.165)" stroke-width="1.30"/><text transform="translate(709.90 848.40) scale(1.010 1)" font-size="10.8" fill="#c7d0d9" stroke="#c7d0d9" stroke-width="0.25" text-anchor="end">0</text><path d="M714.8 845.00H1268.4" stroke="rgba(200,200,200,0.165)" stroke-width="1.30"/><text transform="translate(709.90 883.10) scale(0.965 1)" font-size="10.8" fill="#c7d0d9" stroke="#c7d0d9" stroke-width="0.25" text-anchor="end">-0.5</text><path d="M714.8 879.70H1268.4" stroke="rgba(200,200,200,0.165)" stroke-width="1.30"/><text transform="translate(709.90 917.80) scale(0.965 1)" font-size="10.8" fill="#c7d0d9" stroke="#c7d0d9" stroke-width="0.25" text-anchor="end">-1.0</text><path d="M714.8 914.40H1268.4" stroke="rgba(200,200,200,0.165)" stroke-width="1.30"/><path d="M758.90 775.6V914.4" stroke="rgba(200,200,200,0.165)" stroke-width="1.30"/><text transform="translate(758.90 930.10) scale(0.994 1)" font-size="10.8" fill="#c7d0d9" stroke="#c7d0d9" stroke-width="0.25" text-anchor="middle">23:27</text><path d="M869.65 775.6V914.4" stroke="rgba(200,200,200,0.165)" stroke-width="1.30"/><text transform="translate(869.65 930.10) scale(0.994 1)" font-size="10.8" fill="#c7d0d9" stroke="#c7d0d9" stroke-width="0.25" text-anchor="middle">23:28</text><path d="M980.40 775.6V914.4" stroke="rgba(200,200,200,0.165)" stroke-width="1.30"/><text transform="translate(980.40 930.10) scale(0.994 1)" font-size="10.8" fill="#c7d0d9" stroke="#c7d0d9" stroke-width="0.25" text-anchor="middle">23:29</text><path d="M1091.15 775.6V914.4" stroke="rgba(200,200,200,0.165)" stroke-width="1.30"/><text transform="translate(1091.15 930.10) scale(0.994 1)" font-size="10.8" fill="#c7d0d9" stroke="#c7d0d9" stroke-width="0.25" text-anchor="middle">23:30</text><path d="M1201.90 775.6V914.4" stroke="rgba(200,200,200,0.165)" stroke-width="1.30"/><text transform="translate(1201.90 930.10) scale(0.994 1)" font-size="10.8" fill="#c7d0d9" stroke="#c7d0d9" stroke-width="0.25" text-anchor="middle">23:31</text><path d="M714.8 844.65H1257.9" stroke="#82bb6e" stroke-width="1.7"/><path d="M714.8 845.6H753.7M1219.6 845.6H1257.9" stroke="#82bb6e" stroke-width="0.6"/></svg></div>
<div class="panel" style="left:1298.0px;top:49.0px;width:607.0px;height:96.0px"><div class="ptitle" style="left:294.6px;top:7.0px;transform:translateX(-50%) scaleX(1.038)">localhost:9100</div><div class="thumb"></div></div>
<div class="panel" style="left:1298.0px;top:152.0px;width:607.0px;height:95.0px"><div class="ptitle" style="left:294.6px;top:6.3px;transform:translateX(-50%) scaleX(0.963)">CPU Cores</div><div class="big"><span style="display:inline-block;transform:translateX(-1.2px) scaleX(0.84)">1</span></div></div>
<div class="panel" style="left:1298.0px;top:255.0px;width:607.0px;height:232.0px"><div class="ptitle" style="left:294.6px;top:6.3px;transform:translateX(-50%) scaleX(0.931)">CPU</div><svg style="position:absolute;left:-1px;top:-1px" width="608.0" height="232.0" viewBox="1298.0 255.0 608.0 232.0"><text transform="translate(1350.30 300.00) scale(0.945 1)" font-size="10.8" fill="#c7d0d9" stroke="#c7d0d9" stroke-width="0.25" text-anchor="end">100%</text><text transform="translate(1350.30 334.22) scale(0.927 1)" font-size="10.8" fill="#c7d0d9" stroke="#c7d0d9" stroke-width="0.25" text-anchor="end">75%</text><text transform="translate(1350.30 369.05) scale(0.927 1)" font-size="10.8" fill="#c7d0d9" stroke="#c7d0d9" stroke-width="0.25" text-anchor="end">50%</text><text transform="translate(1350.30 403.88) scale(0.927 1)" font-size="10.8" fill="#c7d0d9" stroke="#c7d0d9" stroke-width="0.25" text-anchor="end">25%</text><text transform="translate(1350.30 438.70) scale(0.895 1)" font-size="10.8" fill="#c7d0d9" stroke="#c7d0d9" stroke-width="0.25" text-anchor="end">0%</text><text transform="translate(1403.20 450.70) scale(0.994 1)" font-size="10.8" fill="#c7d0d9" stroke="#c7d0d9" stroke-width="0.25" text-anchor="middle">23:27</text><text transform="translate(1508.56 450.70) scale(0.994 1)" font-size="10.8" fill="#c7d0d9" stroke="#c7d0d9" stroke-width="0.25" text-anchor="middle">23:28</text><text transform="translate(1613.92 450.70) scale(0.994 1)" font-size="10.8" fill="#c7d0d9" stroke="#c7d0d9" stroke-width="0.25" text-anchor="middle">23:29</text><text transform="translate(1719.28 450.70) scale(0.994 1)" font-size="10.8" fill="#c7d0d9" stroke="#c7d0d9" stroke-width="0.25" text-anchor="middle">23:30</text><text transform="translate(1824.64 450.70) scale(0.994 1)" font-size="10.8" fill="#c7d0d9" stroke="#c7d0d9" stroke-width="0.25" text-anchor="middle">23:31</text><text transform="translate(1316.70 371.30) rotate(-90) scale(0.824 1)" font-size="10.8" fill="#c7d0d9" stroke="#c7d0d9" stroke-width="0.25" text-anchor="middle">%</text><rect x="1355.5" y="296.0" width="522.6" height="139.3" fill="#2078c3"/><rect x="1878.1" y="296.0" width="4.4" height="139.3" fill="#4c481c"/><path d="M1355.5 435.3V434.6L1720 434.4L1772.7 425.9L1825.4 434.2L1878 434.6V435.3Z" fill="#e5b23a"/><path d="M1720 434.4L1772.7 425.9L1825.4 434.2L1772.7 431.9Z" fill="#e24d42"/></svg><div class="ld" style="left:18.5px;top:214.2px;background:#5e8452"></div><div class="lg" style="left:33.9px;top:208.4px;transform:scaleX(1.022)">system</div><div class="ld" style="left:79.9px;top:214.2px;background:#ab882d"></div><div class="lg" style="left:95.9px;top:208.4px;transform:scaleX(0.995)">user</div><div class="ld" style="left:127.7px;top:214.2px;background:#488d9a"></div><div class="lg" style="left:143.4px;top:208.4px;transform:scaleX(1.007)">nice</div><div class="ld" style="left:174.5px;top:214.2px;background:#a86330"></div><div class="lg" style="left:190.3px;top:208.4px;transform:scaleX(1.047)">iowait</div><div class="ld" style="left:230.0px;top:214.2px;background:#a13834"></div><div class="lg" style="left:245.8px;top:208.4px;transform:scaleX(1.022)">steal</div><div class="ld" style="left:279.7px;top:214.2px;background:#1e578d"></div><div class="lg" style="left:295.9px;top:208.4px;transform:scaleX(1.014)">idle</div><div class="ld" style="left:323.6px;top:214.2px;background:#87357c"></div><div class="lg" style="left:339.9px;top:208.4px;transform:scaleX(1.034)">irq</div><div class="ld" style="left:362.9px;top:214.2px;background:#524678"></div><div class="lg" style="left:379.1px;top:208.4px;transform:scaleX(1.068)">softirq</div></div>
<div class="panel" style="left:1298.0px;top:494.0px;width:607.0px;height:232.0px"><div class="abs" style="left:-1px;top:-1px;right:-1px;height:26px;background:#202226"></div><div class="ptitle" style="left:294.6px;top:6.3px;transform:translateX(-50%) scaleX(1.032)">Memory</div><svg style="position:absolute;left:0;top:0;transform:translate(321.10px,7.20px)" width="12.60" height="12.60" viewBox="0 0 24 24"><path fill="#9fa7b3" d="M17,9.17a1,1,0,0,0-1.41,0L12,12.71,8.46,9.17a1,1,0,0,0-1.41,0,1,1,0,0,0,0,1.42l4.24,4.24a1,1,0,0,0,1.42,0L17,10.59A1,1,0,0,0,17,9.17Z"/></svg><svg style="position:absolute;left:-1px;top:-1px" width="608.0" height="232.0" viewBox="1298.0 494.0 608.0 232.0"><text transform="translate(1364.20 539.30) scale(0.954 1)" font-size="10.8" fill="#c7d0d9" stroke="#c7d0d9" stroke-width="0.25" text-anchor="end">1.4 GiB</text><path d="M1368.2 535.20H1883.0" stroke="rgba(200,200,200,0.165)" stroke-width="1.30"/><text transform="translate(1364.20 578.80) scale(1.001 1)" font-size="10.8" fill="#c7d0d9" stroke="#c7d0d9" stroke-width="0.25" text-anchor="end">954 MiB</text><path d="M1368.2 575.70H1883.0" stroke="rgba(200,200,200,0.165)" stroke-width="1.30"/><text transform="translate(1364.20 619.40) scale(1.001 1)" font-size="10.8" fill="#c7d0d9" stroke="#c7d0d9" stroke-width="0.25" text-anchor="end">477 MiB</text><path d="M1368.2 616.30H1883.0" stroke="rgba(200,200,200,0.165)" stroke-width="1.30"/><text transform="translate(1364.20 660.10) scale(0.954 1)" font-size="10.8" fill="#c7d0d9" stroke="#c7d0d9" stroke-width="0.25" text-anchor="end">0 B</text><path d="M1368.2 657.00H1883.0" stroke="rgba(200,200,200,0.165)" stroke-width="1.30"/><path d="M1409.80 535.2V657.0" stroke="rgba(200,200,200,0.165)" stroke-width="1.30"/><text transform="translate(1409.80 672.50) scale(0.994 1)" font-size="10.8" fill="#c7d0d9" stroke="#c7d0d9" stroke-width="0.25" text-anchor="middle">23:27</text><path d="M1512.70 535.2V657.0" stroke="rgba(200,200,200,0.165)" stroke-width="1.30"/><text transform="translate(1512.70 672.50) scale(0.994 1)" font-size="10.8" fill="#c7d0d9" stroke="#c7d0d9" stroke-width="0.25" text-anchor="middle">23:28</text><path d="M1615.60 535.2V657.0" stroke="rgba(200,200,200,0.165)" stroke-width="1.30"/><text transform="translate(1615.60 672.50) scale(0.994 1)" font-size="10.8" fill="#c7d0d9" stroke="#c7d0d9" stroke-width="0.25" text-anchor="middle">23:29</text><path d="M1718.50 535.2V657.0" stroke="rgba(200,200,200,0.165)" stroke-width="1.30"/><text transform="translate(1718.50 672.50) scale(0.994 1)" font-size="10.8" fill="#c7d0d9" stroke="#c7d0d9" stroke-width="0.25" text-anchor="middle">23:30</text><path d="M1821.40 535.2V657.0" stroke="rgba(200,200,200,0.165)" stroke-width="1.30"/><text transform="translate(1821.40 672.50) scale(0.994 1)" font-size="10.8" fill="#c7d0d9" stroke="#c7d0d9" stroke-width="0.25" text-anchor="middle">23:31</text><text transform="translate(1316.00 601.90) rotate(-90) scale(0.902 1)" font-size="10.8" fill="#c7d0d9" stroke="#c7d0d9" stroke-width="0.25" text-anchor="middle">GB</text><path d="M1368.0 572.20L1410.0 572.20L1472.0 572.20L1620.0 572.20L1718.7 572.20L1769.5 572.20L1873.0 572.20L1873.0 657.00L1368.0 657.00Z" fill="#8c69c0"/><path d="M1368.0 573.30L1410.0 573.30L1472.0 573.30L1620.0 573.30L1718.7 573.30L1769.5 573.30L1873.0 573.30L1873.0 657.00L1368.0 657.00Z" fill="#ab5dbb"/><path d="M1368.0 575.00L1410.0 575.00L1472.0 575.00L1620.0 575.00L1718.7 575.00L1769.5 575.00L1873.0 575.00L1873.0 657.00L1368.0 657.00Z" fill="#9382c0"/><path d="M1368.0 575.90L1410.0 575.90L1472.0 575.90L1620.0 575.90L1718.7 575.90L1769.5 575.90L1873.0 575.90L1873.0 657.00L1368.0 657.00Z" fill="#80627e"/><path d="M1368.0 580.90L1410.0 580.90L1472.0 580.90L1620.0 580.90L1718.7 580.90L1769.5 580.90L1873.0 580.90L1873.0 657.00L1368.0 657.00Z" fill="#e88c55"/><path d="M1368.0 583.20L1410.0 583.20L1472.0 583.20L1620.0 583.20L1718.7 583.20L1769.5 583.20L1873.0 583.20L1873.0 657.00L1368.0 657.00Z" fill="#668640"/><path d="M1368.0 585.60L1410.0 585.60L1472.0 585.60L1620.0 585.60L1718.7 585.60L1769.5 585.60L1873.0 585.60L1873.0 657.00L1368.0 657.00Z" fill="#7e562f"/><path d="M1368.0 587.20L1410.0 586.60L1472.0 586.60L1620.0 586.80L1718.7 586.80L1769.5 588.90L1873.0 588.90L1873.0 657.00L1368.0 657.00Z" fill="#72bab2"/><path d="M1368.0 589.30L1410.0 588.60L1472.0 588.60L1620.0 588.90L1718.7 588.90L1769.5 590.80L1873.0 590.80L1873.0 657.00L1368.0 657.00Z" fill="#43777b"/><path d="M1368.0 618.40L1410.0 618.60L1472.0 619.00L1620.0 619.50L1718.7 618.50L1769.5 620.70L1873.0 620.90L1873.0 657.00L1368.0 657.00Z" fill="#bf6629"/><path d="M1368.0 620.60L1410.0 620.80L1472.0 621.20L1620.0 621.70L1718.7 620.70L1769.5 622.90L1873.0 623.10L1873.0 657.00L1368.0 657.00Z" fill="#50767a"/><path d="M1368.0 626.20L1410.0 625.80L1472.0 625.30L1620.0 624.90L1718.7 625.30L1769.5 624.90L1873.0 624.90L1873.0 657.00L1368.0 657.00Z" fill="#4c7aae"/><path d="M1368.0 628.60L1410.0 628.20L1472.0 627.70L1620.0 627.30L1718.7 627.70L1769.5 627.30L1873.0 627.30L1873.0 657.00L1368.0 657.00Z" fill="#50767a"/><path d="M1368.0 640.00L1410.0 639.30L1472.0 637.60L1620.0 637.30L1718.7 637.30L1769.5 637.30L1873.0 637.00L1873.0 657.00L1368.0 657.00Z" fill="#bbab56"/><path d="M1368.0 641.90L1410.0 641.20L1472.0 639.50L1620.0 639.20L1718.7 639.20L1769.5 639.20L1873.0 638.90L1873.0 657.00L1368.0 657.00Z" fill="#a98a40"/><path d="M1368.0 642.90L1410.0 642.40L1472.0 641.20L1620.0 641.10L1718.7 641.10L1769.5 641.10L1873.0 641.10L1873.0 657.00L1368.0 657.00Z" fill="#a9a552"/><path d="M1368.0 643.60L1410.0 643.30L1472.0 642.90L1620.0 642.90L1718.7 642.90L1769.5 642.90L1873.0 642.90L1873.0 657.00L1368.0 657.00Z" fill="#c09a1e"/><path d="M1368.0 645.60L1410.0 645.40L1472.0 645.00L1620.0 645.00L1718.7 645.00L1769.5 645.00L1873.0 645.00L1873.0 657.00L1368.0 657.00Z" fill="#636f43"/><rect x="1368.0" y="571.9" width="22" height="1.3" fill="#9478cf"/><rect x="1852.0" y="571.9" width="21" height="1.4" fill="#9478cf"/><path d="M1409.80 572.2V657.0" stroke="rgba(255,255,255,0.07)" stroke-width="1.30"/><path d="M1512.70 572.2V657.0" stroke="rgba(255,255,255,0.07)" stroke-width="1.30"/><path d="M1615.60 572.2V657.0" stroke="rgba(255,255,255,0.07)" stroke-width="1.30"/><path d="M1718.50 572.2V657.0" stroke="rgba(255,255,255,0.07)" stroke-width="1.30"/><path d="M1821.40 572.2V657.0" stroke="rgba(255,255,255,0.07)" stroke-width="1.30"/><path d="M1368.0 616.30H1873.0" stroke="rgba(255,255,255,0.06)" stroke-width="1.30"/></svg><div class="ld" style="left:18.5px;top:196.1px;background:#59844d"></div><div class="lg" style="left:34.1px;top:190.3px;transform:scaleX(1.005)">Apps</div><div class="ld" style="left:69.5px;top:196.1px;background:#aa842a"></div><div class="lg" style="left:85.4px;top:190.3px;transform:scaleX(1.032)">Buffers</div><div class="ld" style="left:131.7px;top:196.1px;background:#4c919a"></div><div class="lg" style="left:147.2px;top:190.3px;transform:scaleX(0.976)">Cached</div><div class="ld" style="left:194.5px;top:196.1px;background:#af6633"></div><div class="lg" style="left:210.2px;top:190.3px;transform:scaleX(0.949)">Free</div><div class="ld" style="left:241.6px;top:196.1px;background:#aa80a7"></div><div class="lg" style="left:257.5px;top:190.3px;transform:scaleX(0.970)">Slab</div><div class="ld" style="left:289.4px;top:196.1px;background:#1d5991"></div><div class="lg" style="left:305.3px;top:190.3px;transform:scaleX(0.977)">SwapCached</div><div class="ld" style="left:378.8px;top:196.1px;background:#8c3784"></div><div class="lg" style="left:395.0px;top:190.3px;transform:scaleX(1.006)">PageTables</div><div class="ld" style="left:461.5px;top:196.1px;background:#54487c"></div><div class="lg" style="left:477.7px;top:190.3px;transform:scaleX(1.000)">VmallocUsed</div><div class="ld" style="left:18.5px;top:214.1px;background:#486f3b"></div><div class="lg" style="left:34.1px;top:208.3px;transform:scaleX(1.027)">Committed</div><div class="ld" style="left:98.4px;top:214.1px;background:#997b0c"></div><div class="lg" style="left:114.3px;top:208.3px;transform:scaleX(1.005)">Mapped</div><div class="ld" style="left:164.4px;top:214.1px;background:#366291"></div><div class="lg" style="left:180.1px;top:208.3px;transform:scaleX(1.013)">Active</div><div class="ld" style="left:220.8px;top:214.1px;background:#954c1d"></div><div class="lg" style="left:236.6px;top:208.3px;transform:scaleX(1.008)">Inactive</div><svg style="position:absolute;right:3.5px;bottom:3.5px" width="5" height="5" viewBox="0 0 5 5"><path d="M4.5 0V4.5H0" fill="none" stroke="#5a5d63" stroke-width="1"/></svg></div>
<div class="panel" style="left:1298.0px;top:733.0px;width:607.0px;height:232.0px"><div class="ptitle" style="left:294.6px;top:7.0px;transform:translateX(-50%) scaleX(1.014)">Load</div><svg style="position:absolute;left:-1px;top:-1px" width="608.0" height="232.0" viewBox="1298.0 733.0 608.0 232.0"><text transform="translate(1327.10 779.30) scale(1.001 1)" font-size="10.8" fill="#c7d0d9" stroke="#c7d0d9" stroke-width="0.25" text-anchor="end">0.15</text><path d="M1332.0 775.50H1883.0" stroke="rgba(200,200,200,0.165)" stroke-width="1.30"/><text transform="translate(1327.10 825.63) scale(1.001 1)" font-size="10.8" fill="#c7d0d9" stroke="#c7d0d9" stroke-width="0.25" text-anchor="end">0.10</text><path d="M1332.0 821.83H1883.0" stroke="rgba(200,200,200,0.165)" stroke-width="1.30"/><text transform="translate(1327.10 871.96) scale(1.001 1)" font-size="10.8" fill="#c7d0d9" stroke="#c7d0d9" stroke-width="0.25" text-anchor="end">0.05</text><path d="M1332.0 868.16H1883.0" stroke="rgba(200,200,200,0.165)" stroke-width="1.30"/><text transform="translate(1327.10 917.19) scale(1.010 1)" font-size="10.8" fill="#c7d0d9" stroke="#c7d0d9" stroke-width="0.25" text-anchor="end">0</text><path d="M1332.0 914.49H1883.0" stroke="rgba(200,200,200,0.165)" stroke-width="1.30"/><path d="M1375.60 775.5V914.5" stroke="rgba(200,200,200,0.165)" stroke-width="1.30"/><text transform="translate(1375.60 929.70) scale(0.994 1)" font-size="10.8" fill="#c7d0d9" stroke="#c7d0d9" stroke-width="0.25" text-anchor="middle">23:27</text><path d="M1485.80 775.5V914.5" stroke="rgba(200,200,200,0.165)" stroke-width="1.30"/><text transform="translate(1485.80 929.70) scale(0.994 1)" font-size="10.8" fill="#c7d0d9" stroke="#c7d0d9" stroke-width="0.25" text-anchor="middle">23:28</text><path d="M1596.00 775.5V914.5" stroke="rgba(200,200,200,0.165)" stroke-width="1.30"/><text transform="translate(1596.00 929.70) scale(0.994 1)" font-size="10.8" fill="#c7d0d9" stroke="#c7d0d9" stroke-width="0.25" text-anchor="middle">23:29</text><path d="M1706.20 775.5V914.5" stroke="rgba(200,200,200,0.165)" stroke-width="1.30"/><text transform="translate(1706.20 929.70) scale(0.994 1)" font-size="10.8" fill="#c7d0d9" stroke="#c7d0d9" stroke-width="0.25" text-anchor="middle">23:30</text><path d="M1816.40 775.5V914.5" stroke="rgba(200,200,200,0.165)" stroke-width="1.30"/><text transform="translate(1816.40 929.70) scale(0.994 1)" font-size="10.8" fill="#c7d0d9" stroke="#c7d0d9" stroke-width="0.25" text-anchor="middle">23:31</text><path d="M1761.6 914.5L1816.4 802.5L1870.9 849.1V914.5Z" fill="rgba(126,178,109,0.1)"/><path d="M1332 914.5H1761.6L1816.4 802.5L1870.9 849.1" fill="none" stroke="#7eb26d" stroke-width="1.8" stroke-linejoin="round"/></svg></div>
<div class="vthumb"></div>
</body></html>
